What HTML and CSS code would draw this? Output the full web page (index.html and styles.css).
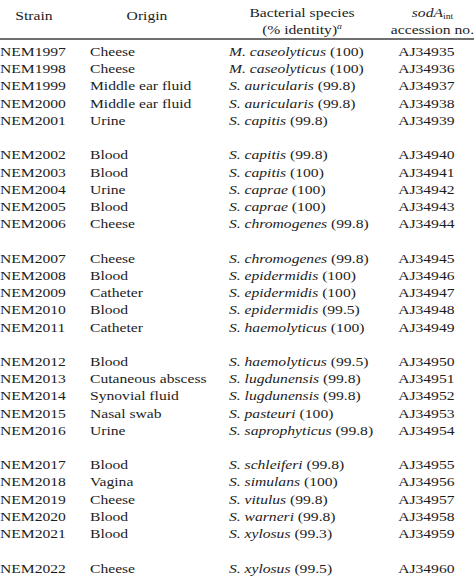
FILE: index.html
```html
<!DOCTYPE html>
<html lang="en">
<head>
<meta charset="utf-8">
<title>Strains table</title>
<link rel="stylesheet" href="styles.css">
</head>
<body>
<div class="sheet">
  <div class="head">
    <div class="hcell low">Strain</div>
    <div class="hcell low">Origin</div>
    <div class="hcell">Bacterial species<br>(% identity)<sup class="note">a</sup></div>
    <div class="hcell"><i>sodA</i><sub class="sub">int</sub><br>accession no.</div>
  </div>
  <div class="groups">
    <div class="group">
      <span>NEM1997</span><span>Cheese</span><span><i>M. caseolyticus</i> (100)</span><span>AJ34935</span>
      <span>NEM1998</span><span>Cheese</span><span><i>M. caseolyticus</i> (100)</span><span>AJ34936</span>
      <span>NEM1999</span><span>Middle ear fluid</span><span><i>S. auricularis</i> (99.8)</span><span>AJ34937</span>
      <span>NEM2000</span><span>Middle ear fluid</span><span><i>S. auricularis</i> (99.8)</span><span>AJ34938</span>
      <span>NEM2001</span><span>Urine</span><span><i>S. capitis</i> (99.8)</span><span>AJ34939</span>
    </div>
    <div class="group">
      <span>NEM2002</span><span>Blood</span><span><i>S. capitis</i> (99.8)</span><span>AJ34940</span>
      <span>NEM2003</span><span>Blood</span><span><i>S. capitis</i> (100)</span><span>AJ34941</span>
      <span>NEM2004</span><span>Urine</span><span><i>S. caprae</i> (100)</span><span>AJ34942</span>
      <span>NEM2005</span><span>Blood</span><span><i>S. caprae</i> (100)</span><span>AJ34943</span>
      <span>NEM2006</span><span>Cheese</span><span><i>S. chromogenes</i> (99.8)</span><span>AJ34944</span>
    </div>
    <div class="group">
      <span>NEM2007</span><span>Cheese</span><span><i>S. chromogenes</i> (99.8)</span><span>AJ34945</span>
      <span>NEM2008</span><span>Blood</span><span><i>S. epidermidis</i> (100)</span><span>AJ34946</span>
      <span>NEM2009</span><span>Catheter</span><span><i>S. epidermidis</i> (100)</span><span>AJ34947</span>
      <span>NEM2010</span><span>Blood</span><span><i>S. epidermidis</i> (99.5)</span><span>AJ34948</span>
      <span>NEM2011</span><span>Catheter</span><span><i>S. haemolyticus</i> (100)</span><span>AJ34949</span>
    </div>
    <div class="group">
      <span>NEM2012</span><span>Blood</span><span><i>S. haemolyticus</i> (99.5)</span><span>AJ34950</span>
      <span>NEM2013</span><span>Cutaneous abscess</span><span><i>S. lugdunensis</i> (99.8)</span><span>AJ34951</span>
      <span>NEM2014</span><span>Synovial fluid</span><span><i>S. lugdunensis</i> (99.8)</span><span>AJ34952</span>
      <span>NEM2015</span><span>Nasal swab</span><span><i>S. pasteuri</i> (100)</span><span>AJ34953</span>
      <span>NEM2016</span><span>Urine</span><span><i>S. saprophyticus</i> (99.8)</span><span>AJ34954</span>
    </div>
    <div class="group">
      <span>NEM2017</span><span>Blood</span><span><i>S. schleiferi</i> (99.8)</span><span>AJ34955</span>
      <span>NEM2018</span><span>Vagina</span><span><i>S. simulans</i> (100)</span><span>AJ34956</span>
      <span>NEM2019</span><span>Cheese</span><span><i>S. vitulus</i> (99.8)</span><span>AJ34957</span>
      <span>NEM2020</span><span>Blood</span><span><i>S. warneri</i> (99.8)</span><span>AJ34958</span>
      <span>NEM2021</span><span>Blood</span><span><i>S. xylosus</i> (99.3)</span><span>AJ34959</span>
    </div>
    <div class="group">
      <span>NEM2022</span><span>Cheese</span><span><i>S. xylosus</i> (99.5)</span><span>AJ34960</span>
    </div>
  </div>
</div>
</body>
</html>
```

FILE: styles.css
```css
html, body {
  margin: 0;
  padding: 0;
  background: #ffffff;
  overflow: hidden;
}

.sheet {
  width: 395px;
  transform: scaleX(1.2);
  transform-origin: 0 0;
  font-family: "Liberation Serif", "Times New Roman", serif;
  font-size: 13px;
  line-height: 17.22px;
  color: #1c1c1c;
}

.head {
  display: grid;
  grid-template-columns: 56.6px 131.8px 126.6px 90.8px;
  padding-top: 3.7px;
  border-bottom: 2px solid #6f6f6f;
  width: 395px;
}

.hcell {
  text-align: center;
  white-space: nowrap;
}

.hcell.low {
  padding-top: 3.3px;
}

.note {
  font-style: italic;
  font-size: 8px;
  line-height: 0;
  vertical-align: 5px;
}

.sub {
  font-size: 8px;
  line-height: 0;
  vertical-align: -2px;
}

.groups {
  display: flex;
  flex-direction: column;
  gap: 17.22px;
  padding-top: 2.9px;
}

.group {
  display: grid;
  grid-template-columns: 75px 115.8px 141px 63.2px;
  white-space: nowrap;
}
```
